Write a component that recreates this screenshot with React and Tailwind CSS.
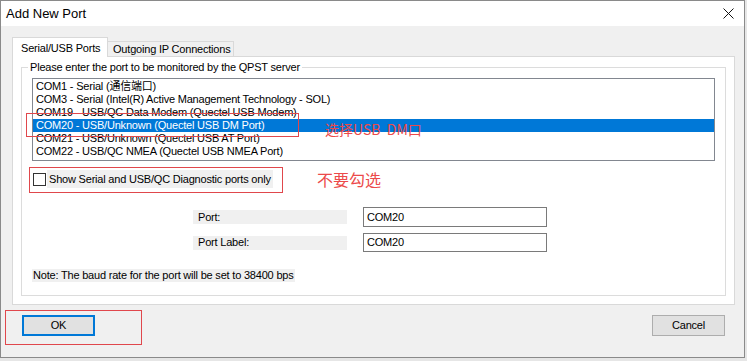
import { useState } from 'react'

const PORTS = [
  'COM1 - Serial (通信端口)',
  'COM3 - Serial (Intel(R) Active Management Technology - SOL)',
  'COM19 - USB/QC Data Modem (Quectel USB Modem)',
  'COM20 - USB/Unknown (Quectel USB DM Port)',
  'COM21 - USB/Unknown (Quectel USB AT Port)',
  'COM22 - USB/QC NMEA (Quectel USB NMEA Port)',
]

export default function App() {
  const [selected, setSelected] = useState(3)
  const [diagOnly, setDiagOnly] = useState(false)

  return (
    <div className="relative w-[747px] h-[361px] overflow-hidden bg-[#e6e6e6] text-[11px] tracking-[-0.2px] text-black whitespace-nowrap font-['Liberation_Sans','Noto_Sans_CJK_SC',Arial,sans-serif]">
      <div className="w-[745px] h-[358px] border border-[#8a8a8a] bg-[#f0f0f0] flex flex-col">
        {/* Title bar */}
        <div className="h-[25px] bg-white flex items-center justify-between pl-[5px] pr-[10px]">
          <span className="text-[13px] tracking-normal">Add New Port</span>
          <svg className="w-[11px] h-[11px]" viewBox="0 0 11 11" fill="none" stroke="#111" strokeWidth="1">
            <path d="M0.5 0.5l10 10M10.5 0.5l-10 10" />
          </svg>
        </div>

        <div className="flex-1 flex flex-col pl-[11px] pr-[9px] pt-[11px]">
          {/* Tabs */}
          <div className="flex items-end h-[19px]">
            <div className="relative z-10 h-[20px] -mb-px w-[96px] bg-white border-x border-t border-[#d9d9d9] flex items-start pt-[2px] pl-[8px]">
              Serial/USB Ports
            </div>
            <div className="h-[15px] w-[126px] bg-[#f0f0f0] border-t border-r border-[#d9d9d9] flex items-center pl-[5px]">
              Outgoing IP Connections
            </div>
          </div>

          {/* Panel */}
          <div className="h-[249px] bg-white border border-[#d9d9d9] px-[8px] pt-[4px]">
            <fieldset className="h-[235px] border border-[#dcdcdc]">
              <legend className="ml-[6px] px-[2px] leading-[13px]">
                Please enter the port to be monitored by the QPST server
              </legend>
              <div className="px-[10px] pt-[4px]">
                <div className="h-[83px] border border-[#828790] bg-white pt-[1px]">
                  {PORTS.map((p, i) => (
                    <div
                      key={p}
                      onClick={() => setSelected(i)}
                      className={`h-[13px] leading-[13px] pl-[3px] ${
                        selected === i ? 'bg-[#0078d7] text-white' : ''
                      }`}
                    >
                      {p}
                    </div>
                  ))}
                </div>

                <label className="mt-[9px] h-[18px] flex items-center">
                  <span
                    onClick={() => setDiagOnly(!diagOnly)}
                    className="ml-[1px] w-[13px] h-[13px] border border-[#333] bg-white flex items-center justify-center"
                  >
                    {diagOnly && (
                      <svg className="w-[9px] h-[9px]" viewBox="0 0 9 9" fill="none" stroke="#000" strokeWidth="1.5">
                        <path d="M1 4.5l2.5 2.5L8 1.5" />
                      </svg>
                    )}
                  </span>
                  <span className="ml-[1px] h-full bg-[#f0f0f0] px-[2px] flex items-center">
                    Show Serial and USB/QC Diagnostic ports only
                  </span>
                </label>

                <div className="mt-[19px] pl-[161px] flex items-center h-[20px]">
                  <div className="w-[154px] h-[14px] bg-[#f0f0f0] flex items-center pl-[5px]">Port:</div>
                  <div className="ml-[16px] w-[184px] h-[20px] border border-[#7a7a7a] bg-white flex items-center pl-[3px]">COM20</div>
                </div>
                <div className="mt-[6px] pl-[161px] flex items-center h-[19px]">
                  <div className="w-[154px] h-[14px] bg-[#f0f0f0] flex items-center pl-[5px]">Port Label:</div>
                  <div className="ml-[16px] w-[184px] h-[19px] border border-[#7a7a7a] bg-white flex items-center pl-[3px]">COM20</div>
                </div>

                <div className="mt-[15px]">
                  <span className="inline-block h-[13px] leading-[13px] bg-[#f0f0f0] px-[1px]">
                    Note: The baud rate for the port will be set to 38400 bps
                  </span>
                </div>
              </div>
            </fieldset>
          </div>

          {/* Buttons */}
          <div className="mt-[10px] px-[10px] flex justify-between">
            <button className="w-[73px] h-[21px] border-2 border-[#0078d7] bg-[#e1e1e1] flex items-center justify-center">
              OK
            </button>
            <button className="w-[73px] h-[21px] border border-[#adadad] bg-[#e1e1e1] flex items-center justify-center">
              Cancel
            </button>
          </div>
        </div>
      </div>

      {/* Red annotations */}
      <div className="absolute left-[26px] top-[113px] w-[273px] h-[24px] border border-[#e0474c]" />
      <div className="absolute left-[325px] top-[120px] text-[14px] leading-[18px] tracking-normal text-[#ec4a4a] font-['Noto_Sans_CJK_SC',sans-serif]">
        选择USB&nbsp;&nbsp;DM口
      </div>
      <div className="absolute left-[29px] top-[167px] w-[254px] h-[26px] border border-[#e0474c]" />
      <div className="absolute left-[317px] top-[169px] text-[16px] leading-[20px] tracking-normal text-[#ec4a4a] font-['Noto_Sans_CJK_SC',sans-serif]">
        不要勾选
      </div>
      <div className="absolute left-[5px] top-[310px] w-[137px] h-[35px] border border-[#e0474c]" />
    </div>
  )
}
